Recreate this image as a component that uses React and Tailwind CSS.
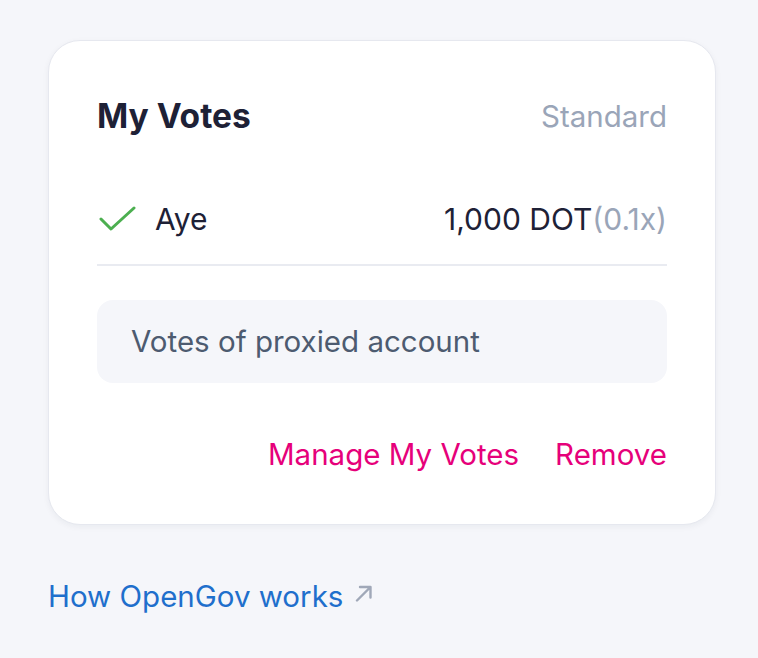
export default function App() {
    return (
        <div className="min-h-screen bg-[#f5f6fa] px-[48px] pt-[40px] font-['Inter',sans-serif]">
            <div className="w-[668px] bg-white border border-[#e6e8ef] rounded-[32px] shadow-[0_2px_6px_rgba(20,30,60,0.05)] px-[48px] pt-[57px] pb-[54px]">
                <div className="flex items-center justify-between h-[36px]">
                    <h2 className="text-[33.5px] font-bold text-[#1e2136]">My Votes</h2>
                    <span className="text-[29.5px] text-[#9aa5b8]">Standard</span>
                </div>

                <div className="mt-[69px] flex items-center justify-between h-[32px]">
                    <div className="flex items-center gap-[18px]">
                        <svg width="38" height="28" viewBox="0 0 38 28" fill="none" className="ml-[2px]">
                            <path d="M2 14 L12 24 L35 3" stroke="#4caf50" strokeWidth="3" strokeLinecap="round" strokeLinejoin="round" />
                        </svg>
                        <span className="text-[30px] text-[#1e2136]">Aye</span>
                    </div>
                    <div className="text-[30px]">
                        <span className="text-[#1e2136]">1,000 DOT</span>
                        <span className="text-[#9aa5b8]">(0.1x)</span>
                    </div>
                </div>

                <div className="mt-[29px] h-[2px] bg-[#e9ebf1]" />

                <div className="mt-[34px] h-[83px] rounded-[16px] bg-[#f5f6fa] px-[34px] flex items-center">
                    <span className="text-[29.5px] text-[#4d5b70]">Votes of proxied account</span>
                </div>

                <div className="mt-[55px] flex justify-end gap-[36px] h-[32px] items-center">
                    <button className="text-[29.5px] text-[#e6007a]">Manage My Votes</button>
                    <button className="text-[29.5px] text-[#e6007a]">Remove</button>
                </div>
            </div>

            <a className="mt-[55px] flex items-center gap-[12px] h-[32px] text-[29.5px] text-[#1f6fcc]">
                How OpenGov works
                <svg width="18" height="17" viewBox="0 0 18 17" fill="none" className="-mt-[6px]">
                    <path d="M2 15.5 L15.5 2 M5 2 H15.5 V12.5" stroke="#a0a8b8" strokeWidth="2.4" strokeLinecap="round" strokeLinejoin="round" />
                </svg>
            </a>
        </div>
    );
}
